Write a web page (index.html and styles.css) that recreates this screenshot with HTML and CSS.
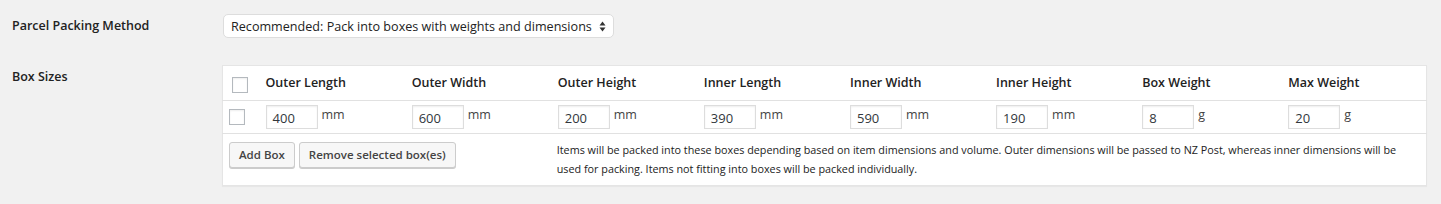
FILE: index.html
```html
<!DOCTYPE html>
<html>
<head>
<meta charset="utf-8">
<link rel="stylesheet" href="styles.css">
</head>
<body>
<div class="form">
  <div class="row row-method">
    <div class="label">Parcel Packing Method</div>
    <div class="field">
      <div class="select">
        <span>Recommended: Pack into boxes with weights and dimensions</span>
        <svg class="arrows" width="7" height="11" viewBox="0 0 7 11"><path d="M0.5 4.5 L3.5 0.5 L6.5 4.5 Z M0.5 6.5 L3.5 10.5 L6.5 6.5 Z" fill="#333"/></svg>
      </div>
    </div>
  </div>
  <div class="row row-boxes">
    <div class="label">Box Sizes</div>
    <div class="field">
      <table class="boxes">
        <colgroup>
          <col class="c-check">
          <col class="c-dim"><col class="c-dim"><col class="c-dim"><col class="c-dim">
          <col class="c-dim"><col class="c-dim"><col class="c-dim"><col class="c-dim">
        </colgroup>
        <thead>
          <tr>
            <th class="check head-check"><span class="cb"></span></th>
            <th>Outer Length</th>
            <th>Outer Width</th>
            <th>Outer Height</th>
            <th>Inner Length</th>
            <th>Inner Width</th>
            <th>Inner Height</th>
            <th>Box Weight</th>
            <th>Max Weight</th>
          </tr>
        </thead>
        <tbody>
          <tr>
            <td class="check"><span class="cb"></span></td>
            <td><span class="inp">400</span><span class="unit">mm</span></td>
            <td><span class="inp">600</span><span class="unit">mm</span></td>
            <td><span class="inp">200</span><span class="unit">mm</span></td>
            <td><span class="inp">390</span><span class="unit">mm</span></td>
            <td><span class="inp">590</span><span class="unit">mm</span></td>
            <td><span class="inp">190</span><span class="unit">mm</span></td>
            <td><span class="inp">8</span><span class="unit">g</span></td>
            <td><span class="inp">20</span><span class="unit">g</span></td>
          </tr>
        </tbody>
        <tfoot>
          <tr>
            <th colspan="3" class="actions">
              <div class="btns">
                <span class="btn">Add Box</span>
                <span class="btn">Remove selected box(es)</span>
              </div>
            </th>
            <td colspan="6" class="desc">Items will be packed into these boxes depending based on item dimensions and volume. Outer dimensions will be passed to NZ Post, whereas inner dimensions will be used for packing. Items not fitting into boxes will be packed individually.</td>
          </tr>
        </tfoot>
      </table>
    </div>
  </div>
</div>
</body>
</html>
```
FILE: styles.css
```css
html, body {
  margin: 0;
  padding: 0;
}
body {
  background: #f1f1f1;
  font-family: "Open Sans", "Liberation Sans", sans-serif;
  font-size: 12.5px;
  color: #444;
  width: 1441px;
  height: 204px;
  overflow: hidden;
}
.form {
  padding-top: 14px;
}
.row {
  display: flex;
}
.label {
  width: 211px;
  padding-left: 12px;
  font-weight: 600;
  color: #222;
  font-size: 12.5px;
  line-height: 24px;
}
.row-boxes {
  margin-top: 27px;
}
.field {
  flex: 0 0 auto;
}
.select {
  box-sizing: border-box;
  display: flex;
  align-items: center;
  height: 24px;
  width: 391px;
  padding: 0 7px 0 7px;
  background: #fff;
  border: 1px solid #ddd;
  border-radius: 5px;
  color: #222;
  font-size: 12.6px;
  white-space: nowrap;
  justify-content: space-between;
}
.arrows {
  margin-left: 6px;
}
.row-boxes .field {
  margin-left: -1px;
}
.boxes {
  border-collapse: collapse;
  table-layout: fixed;
  width: 1205px;
  background: #fff;
  border: 1px solid #e5e5e5;
  box-shadow: 0 1px 1px rgba(0,0,0,0.04);
}
.c-check { width: 35px; }
.c-dim { width: 146px; }
.boxes th, .boxes td {
  padding: 0 8px;
  text-align: left;
  vertical-align: middle;
}
.boxes thead th {
  height: 33px;
  font-weight: 600;
  color: #222;
  font-size: 12.5px;
  border-bottom: 1px solid #e1e1e1;
  padding-bottom: 1px;
}
.boxes tbody td {
  height: 32px;
  border-bottom: 1px solid #e1e1e1;
  white-space: nowrap;
}
.boxes th.check, .boxes td.check {
  padding: 0 0 0 6px;
}
.boxes th.head-check {
  padding-left: 9px;
}
.cb {
  display: block;
  box-sizing: border-box;
  width: 16px;
  height: 16px;
  border: 1px solid #b4b9be;
  background: #fff;
  box-shadow: inset 0 1px 2px rgba(0,0,0,0.07);
}
.head-check .cb {
  margin-top: 4px;
}
.inp {
  box-sizing: border-box;
  display: inline-block;
  vertical-align: middle;
  width: 52px;
  height: 24px;
  line-height: 22px;
  padding: 1px 6px 0;
  border: 1px solid #ddd;
  box-shadow: inset 0 1px 2px rgba(0,0,0,0.07);
  background: #fff;
  color: #32373c;
  font-size: 13px;
}
.unit {
  display: inline-block;
  vertical-align: middle;
  margin-left: 4px;
  margin-top: -5px;
  color: #444;
  font-size: 12.5px;
}
.boxes th.actions {
  height: 52px;
  padding: 8px 0 0 6px;
  vertical-align: top;
  font-weight: normal;
  box-sizing: border-box;
}
.btns {
  display: flex;
  gap: 4px;
}
.btn {
  box-sizing: border-box;
  display: block;
  height: 26px;
  line-height: 24px;
  padding: 0 9px;
  border: 1px solid #ccc;
  border-radius: 3px;
  background: #f7f7f7;
  box-shadow: 0 1px 0 #ccc;
  color: #444;
  font-size: 11.5px;
  font-weight: 600;
  white-space: nowrap;
}
.boxes td.desc {
  height: 52px;
  box-sizing: border-box;
  vertical-align: top;
  font-size: 10.8px;
  line-height: 19px;
  color: #222;
  padding: 6px 20px 0 7px;
}
```
